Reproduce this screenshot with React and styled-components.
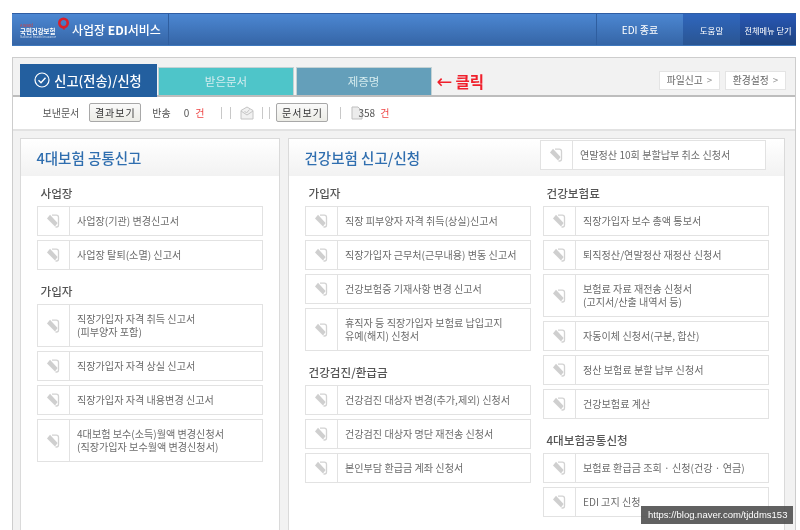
import React from 'react';
import styled, { createGlobalStyle } from 'styled-components';

const Global = createGlobalStyle`
  html, body { margin: 0; padding: 0; background: #fff; }
  body { font-family: "Noto Sans CJK KR", "Noto Sans", sans-serif; }
  * { box-sizing: border-box; }
`;

const Page = styled.div`
  position: relative;
  width: 800px;
  height: 530px;
  overflow: hidden;
  padding: 13px 4px 0 12px;
  filter: blur(0.45px);
`;

const Header = styled.header`
  display: flex;
  height: 33px;
  background: linear-gradient(#4c87d2, #3565a6);
  border-top: 1px solid #2f5da3;
  border-bottom: 1px solid #3f78bd;
  color: #fff;
`;

const Brand = styled.div`
  display: flex;
  align-items: center;
  width: 157px;
  padding-left: 8px;
  border-right: 1px solid #2f5e9f;
`;

const LogoBox = styled.div`
  position: relative;
  display: flex;
  flex-direction: column;
  width: 40px;
  height: 16px;
  margin-top: 2px;
`;

const LogoTop = styled.span`
  height: 5px;
  font-size: 4px;
  line-height: 5px;
  color: #d8403f;
`;

const LogoName = styled.span`
  height: 7px;
  font-size: 6.4px;
  line-height: 7px;
  font-weight: 700;
  white-space: nowrap;
`;

const LogoSub = styled.span`
  height: 4px;
  font-size: 3px;
  line-height: 4px;
  opacity: 0.7;
  white-space: nowrap;
`;

const LogoRing = styled.svg`
  position: absolute;
  left: 37px;
  top: -6px;
  width: 13px;
  height: 13px;
`;

const BrandTitle = styled.span`
  margin-left: 12px;
  font-size: 12px;
  font-weight: 500;
  white-space: nowrap;
`;

const HeaderFill = styled.div`
  flex: 1;
  border-right: 1px solid #2f5e9f;
`;

const HeaderLink = styled.div`
  display: flex;
  align-items: center;
  justify-content: center;
  width: ${(p) => p.$w}px;
  font-size: ${(p) => p.$size}px;
  background: ${(p) => p.$bg};
  white-space: nowrap;
`;

const Frame = styled.div`
  margin-top: 11px;
  height: 600px;
  background: #f2f2f2;
  border: 1.5px solid #cdcdcd;
  border-bottom: 0;
`;

const TabBar = styled.div`
  display: flex;
  align-items: flex-end;
  height: 38.5px;
  padding-left: 6.5px;
  border-bottom: 2px solid #bdbdbd;
`;

const ActiveTab = styled.div`
  display: flex;
  align-items: center;
  justify-content: center;
  gap: 4px;
  width: 137px;
  height: 33px;
  margin-bottom: -2px;
  background: #235f9f;
  color: #fff;
  font-size: 13.2px;
  font-weight: 500;
`;

const Tab = styled.div`
  display: flex;
  align-items: center;
  justify-content: center;
  width: 136px;
  height: 28px;
  margin-left: 1.5px;
  background: ${(p) => p.$bg};
  border: 1px solid #c4d2d4;
  border-bottom: 0;
  color: #d5ecef;
  font-size: 11.5px;
`;

const ClickNote = styled.div`
  display: flex;
  align-items: center;
  gap: 3px;
  margin: 0 0 1px 5px;
  height: 26px;
  color: #f0202c;
  font-size: 15.5px;
  font-weight: 700;
  white-space: nowrap;
`;

const ClickArrow = styled.span`
  font-family: "DejaVu Sans", sans-serif;
  font-size: 19px;
  font-weight: 400;
`;

const SideButtons = styled.div`
  display: flex;
  gap: 5px;
  margin: 0 0 5px auto;
  padding-right: 9px;
`;

const SideButton = styled.div`
  display: flex;
  align-items: center;
  justify-content: center;
  gap: 4px;
  width: 61px;
  height: 19px;
  background: #fff;
  border: 1px solid #e4e4e4;
  color: #666;
  font-size: 9.8px;
`;

const Chevron = styled.span`
  color: #999;
`;

const Toolbar = styled.div`
  display: flex;
  align-items: center;
  height: 34px;
  padding-left: 29.5px;
  background: #fff;
  border-bottom: 2px solid #e2e2e2;
  color: #555;
  font-size: 10px;
`;

const ToolText = styled.span`
  margin-left: ${(p) => p.$ml || 0}px;
  white-space: nowrap;
  color: ${(p) => (p.$red ? '#ee4444' : '#555')};
`;

const ToolButton = styled.div`
  display: flex;
  align-items: center;
  justify-content: center;
  margin-left: ${(p) => p.$ml}px;
  width: 52px;
  height: 19px;
  background: linear-gradient(#fafafa, #ecece6);
  border: 1px solid #a8a8a8;
  border-radius: 2px;
  color: #333;
  font-size: 10px;
  letter-spacing: 1px;
`;

const ToolSep = styled.span`
  width: 1px;
  height: 12px;
  margin-left: ${(p) => p.$ml}px;
  background: #c8c8c8;
`;

const ToolIcon = styled.svg`
  flex: none;
  margin-left: ${(p) => p.$ml}px;
  margin-right: ${(p) => p.$mr || 0}px;
  width: ${(p) => p.$w}px;
  height: 14px;
`;

const Panels = styled.div`
  display: flex;
  gap: 8px;
  padding: 7px 0 0 6.5px;
`;

const Panel = styled.section`
  width: ${(p) => p.$w}px;
  height: 450px;
  background: #fff;
  border: 1px solid #dadada;
`;

const PanelHead = styled.div`
  display: flex;
  align-items: center;
  justify-content: space-between;
  height: 37px;
  padding: 0 18px 0 16px;
  background: linear-gradient(#fff, #f2f2f2);
`;

const PanelTitle = styled.h2`
  margin: 0;
  color: #2f6eaf;
  font-size: 14.5px;
  font-weight: 500;
  white-space: nowrap;
`;

const HeadItem = styled.div`
  align-self: flex-start;
  margin-top: 1px;
`;

const PanelBody = styled.div`
  display: grid;
  grid-template-columns: ${(p) => p.$cols};
  column-gap: 13px;
  padding: 9px 0 0 16px;
`;

const Section = styled.div`
  display: flex;
  flex-direction: column;
  gap: 4px;
  & + & {
    margin-top: 13px;
  }
`;

const SectionLabel = styled.h3`
  margin: 0 0 -4px;
  height: 21px;
  padding-left: 4px;
  color: #555;
  font-size: 11.6px;
  font-weight: 500;
  line-height: 16px;
  white-space: nowrap;
`;

const Row = styled.div`
  display: flex;
  flex: none;
  width: 226px;
  height: ${(p) => (p.$tall ? 43 : 30)}px;
  background: #fff;
  border: 1px solid #e2e2e2;
`;

const RowIcon = styled.div`
  display: flex;
  align-items: center;
  justify-content: center;
  flex: none;
  width: 32px;
  border-right: 1px solid #e2e2e2;
`;

const RowText = styled.div`
  display: flex;
  align-items: center;
  padding-left: 7.5px;
  color: #6c6c6c;
  font-size: 10.1px;
  line-height: 13px;
  white-space: pre-line;
`;

const Watermark = styled.div`
  position: absolute;
  left: 641px;
  top: 506px;
  width: 152px;
  height: 18px;
  padding-left: 7px;
  background: rgba(75, 75, 75, 0.88);
  color: #fff;
  font-family: "Liberation Sans", sans-serif;
  font-size: 9.5px;
  line-height: 18px;
  white-space: nowrap;
`;

const DocIcon = () => (
  <svg width="14" height="15" viewBox="0 0 14 15" aria-hidden="true">
    <path d="M6 2.2h4.5a2 2 0 0 1 2 2v7.8a2 2 0 0 1-2 2H9.5" fill="none" stroke="#d2d2d2" strokeWidth="1.3" />
    <path d="M1 5.5L4 1.8l7.6 8.2-2.6 3.6z" fill="#cfcfcf" />
  </svg>
);

const Item = ({ text, tall }) => (
  <Row $tall={tall}>
    <RowIcon>
      <DocIcon />
    </RowIcon>
    <RowText>{text}</RowText>
  </Row>
);

const Group = ({ label, items }) => (
  <Section>
    <SectionLabel>{label}</SectionLabel>
    {items.map((it) => (
      <Item key={it} text={it} tall={it.includes('\n')} />
    ))}
  </Section>
);

export default function App() {
  return (
    <Page>
      <Global />
      <Header>
        <Brand>
          <LogoBox>
            <LogoTop>A ward</LogoTop>
            <LogoName>국민건강보험</LogoName>
            <LogoSub>National Health Insurance</LogoSub>
            <LogoRing viewBox="0 0 13 13" aria-hidden="true">
              <circle cx="6.5" cy="6" r="4.2" fill="none" stroke="#d8202c" strokeWidth="2.6" />
              <path d="M5 9.5l2.5 3" stroke="#d8202c" strokeWidth="1.4" />
            </LogoRing>
          </LogoBox>
          <BrandTitle>
            사업장 <b>EDI</b>서비스
          </BrandTitle>
        </Brand>
        <HeaderFill />
        <HeaderLink $w={86} $size={10} $bg="none">EDI 종료</HeaderLink>
        <HeaderLink $w={57} $size={8.5} $bg="linear-gradient(#2f66bd, #2a5592)">도움말</HeaderLink>
        <HeaderLink $w={56} $size={8.2} $bg="linear-gradient(#2857b5, #1e437f)">전체메뉴 닫기</HeaderLink>
      </Header>
      <Frame>
        <TabBar>
          <ActiveTab>
            <svg width="16" height="16" viewBox="0 0 16 16" aria-hidden="true">
              <circle cx="8" cy="8" r="7" fill="none" stroke="#fff" strokeWidth="1.2" />
              <path d="M4.5 8.2l2.5 2.5 4.5-5" fill="none" stroke="#fff" strokeWidth="1.4" />
            </svg>
            신고(전송)/신청
          </ActiveTab>
          <Tab $bg="#4ec5c9">받은문서</Tab>
          <Tab $bg="#649fba">제증명</Tab>
          <ClickNote>
            <ClickArrow>←</ClickArrow>
            클릭
          </ClickNote>
          <SideButtons>
            <SideButton>파일신고 <Chevron>&gt;</Chevron></SideButton>
            <SideButton>환경설정 <Chevron>&gt;</Chevron></SideButton>
          </SideButtons>
        </TabBar>
        <Toolbar>
          <ToolText>보낸문서</ToolText>
          <ToolButton $ml={10}>결과보기</ToolButton>
          <ToolText $ml={11}>반송</ToolText>
          <ToolText $ml={13}>0</ToolText>
          <ToolText $ml={6} $red>건</ToolText>
          <ToolSep $ml={17} />
          <ToolSep $ml={8} />
          <ToolIcon $ml={9} $w={14} viewBox="0 0 14 14" aria-hidden="true">
            <path d="M1 4.5L7 1l6 3.5V13H1z" fill="#f1f1f1" stroke="#c4c4c4" />
            <path d="M1 5l6 4 6-4M4.5 5l2 2 3-3.5" fill="none" stroke="#c4c4c4" />
          </ToolIcon>
          <ToolSep $ml={8} />
          <ToolSep $ml={6} />
          <ToolButton $ml={6}>문서보기</ToolButton>
          <ToolSep $ml={12} />
          <ToolIcon $ml={10} $mr={-5} $w={12} viewBox="0 0 12 14" aria-hidden="true">
            <path d="M1 1h6l4 4v8H1z" fill="#ececec" stroke="#bfbfbf" />
          </ToolIcon>
          <ToolText>358</ToolText>
          <ToolText $ml={5} $red>건</ToolText>
        </Toolbar>
        <Panels>
          <Panel $w={260}>
            <PanelHead>
              <PanelTitle>4대보험 공통신고</PanelTitle>
            </PanelHead>
            <PanelBody $cols="226px">
              <div>
                <Group label="사업장" items={['사업장(기관) 변경신고서', '사업장 탈퇴(소멸) 신고서']} />
                <Group
                  label="가입자"
                  items={[
                    '직장가입자 자격 취득 신고서\n(피부양자 포함)',
                    '직장가입자 자격 상실 신고서',
                    '직장가입자 자격 내용변경 신고서',
                    '4대보험 보수(소득)월액 변경신청서\n(직장가입자 보수월액 변경신청서)',
                  ]}
                />
              </div>
            </PanelBody>
          </Panel>
          <Panel $w={497}>
            <PanelHead>
              <PanelTitle>건강보험 신고/신청</PanelTitle>
              <HeadItem>
                <Item text="연말정산 10회 분할납부 취소 신청서" />
              </HeadItem>
            </PanelHead>
            <PanelBody $cols="225px 226px">
              <div>
                <Group
                  label="가입자"
                  items={[
                    '직장 피부양자 자격 취득(상실)신고서',
                    '직장가입자 근무처(근무내용) 변동 신고서',
                    '건강보험증 기재사항 변경 신고서',
                    '휴직자 등 직장가입자 보험료 납입고지\n유예(해지) 신청서',
                  ]}
                />
                <Group
                  label="건강검진/환급금"
                  items={[
                    '건강검진 대상자 변경(추가,제외) 신청서',
                    '건강검진 대상자 명단 재전송 신청서',
                    '본인부담 환급금 계좌 신청서',
                  ]}
                />
              </div>
              <div>
                <Group
                  label="건강보험료"
                  items={[
                    '직장가입자 보수 총액 통보서',
                    '퇴직정산/연말정산 재정산 신청서',
                    '보험료 자료 재전송 신청서\n(고지서/산출 내역서 등)',
                    '자동이체 신청서(구분, 합산)',
                    '정산 보험료 분할 납부 신청서',
                    '건강보험료 계산',
                  ]}
                />
                <Group
                  label="4대보험공통신청"
                  items={['보험료 환급금 조회 · 신청(건강 · 연금)', 'EDI 고지 신청']}
                />
              </div>
            </PanelBody>
          </Panel>
        </Panels>
      </Frame>
      <Watermark>https://blog.naver.com/tjddms153</Watermark>
    </Page>
  );
}
